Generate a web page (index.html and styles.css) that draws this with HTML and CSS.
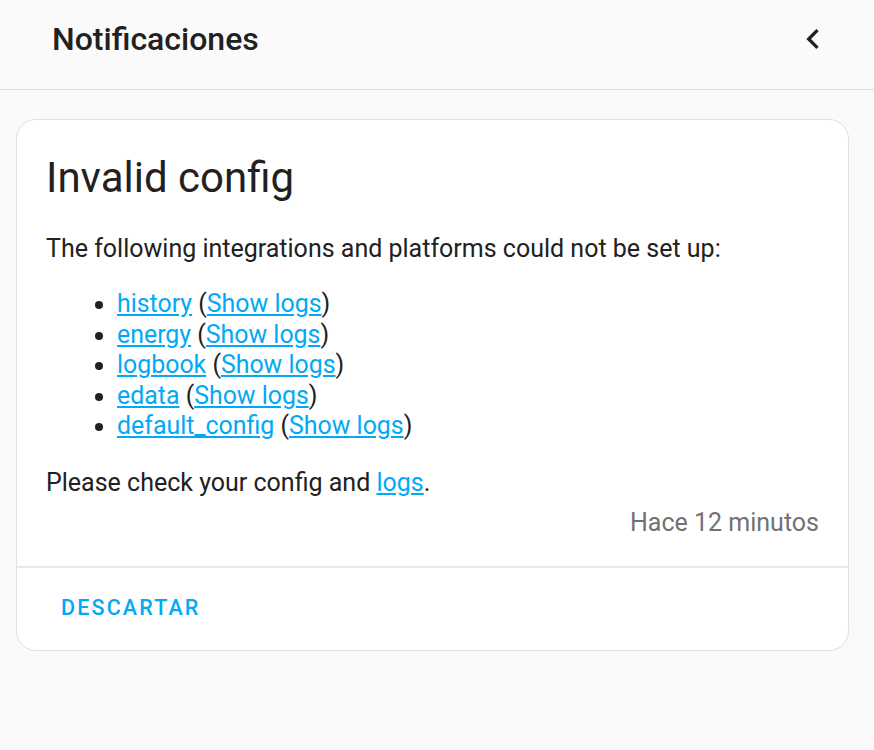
FILE: index.html
```html
<!DOCTYPE html>
<html lang="es">
<head>
<meta charset="utf-8">
<title>Notificaciones</title>
<link rel="stylesheet" href="styles.css">
</head>
<body>
<header class="topbar">
  <div class="topbar-title">Notificaciones</div>
  <button class="icon-btn" aria-label="Cerrar">
    <svg viewBox="0 0 24 24" class="chev"><path d="M15.41,16.58L10.83,12L15.41,7.41L14,6L8,12L14,18L15.41,16.58Z"/></svg>
  </button>
</header>
<main class="content">
  <section class="card">
    <div class="card-body">
      <h1 class="card-title">Invalid config</h1>
      <p class="text">The following integrations and platforms could not be set up:</p>
      <ul class="list">
        <li><a href="#">history</a> (<a href="#">Show logs</a>)</li>
        <li><a href="#">energy</a> (<a href="#">Show logs</a>)</li>
        <li><a href="#">logbook</a> (<a href="#">Show logs</a>)</li>
        <li><a href="#">edata</a> (<a href="#">Show logs</a>)</li>
        <li><a href="#">default_config</a> (<a href="#">Show logs</a>)</li>
      </ul>
      <p class="text">Please check your config and <a href="#">logs</a>.</p>
      <div class="time">Hace 12 minutos</div>
    </div>
    <div class="card-actions">
      <button class="text-btn">DESCARTAR</button>
    </div>
  </section>
</main>
</body>
</html>
```
FILE: styles.css
```css
* { box-sizing: border-box; }
html, body { margin: 0; padding: 0; }
body {
  background: #fafafa;
  font-family: Roboto, "Liberation Sans", sans-serif;
  color: #212121;
}
.topbar {
  height: 90px;
  border-bottom: 1px solid #e0e0e0;
  display: flex;
  align-items: center;
  justify-content: space-between;
  padding: 0 41px 0 52px;
}
.topbar-title {
  font-size: 32px;
  font-weight: 500;
  color: #212121;
  margin-top: -12px;
}
.icon-btn {
  background: none;
  border: 0;
  padding: 0;
  width: 40px;
  height: 40px;
  display: flex;
  margin-top: -12px;
}
.chev { width: 40px; height: 40px; fill: #212121; }
.content {
  padding: 29px 25px 0 16px;
}
.card {
  background: #fff;
  border: 1px solid #e0e0e0;
  border-radius: 20px;
  overflow: hidden;
}
.card-body {
  padding: 26px 29px 28px 29px;
}
.card-title {
  margin: 0 0 24px 0;
  font-size: 42px;
  font-weight: 400;
  line-height: 64px;
  color: #212121;
}
.text {
  margin: 0;
  font-size: 25px;
  line-height: 30px;
}
.list {
  margin: 25px 0 26px 0;
  padding-left: 71px;
  font-size: 24.9px;
  line-height: 30.5px;
}
a { color: #03a9f4; }
.time {
  margin-top: 10px;
  text-align: right;
  font-size: 25px;
  line-height: 30px;
  color: #727272;
}
.card-actions {
  border-top: 2px solid #e8e8e8;
  padding: 19px 29px 22px 29px;
}
.text-btn {
  background: none;
  border: 0;
  padding: 8px 15px;
  font-family: Roboto, "Liberation Sans", sans-serif;
  font-size: 21.5px;
  font-weight: 500;
  letter-spacing: 2.15px;
  color: #03a9f4;
}
```
